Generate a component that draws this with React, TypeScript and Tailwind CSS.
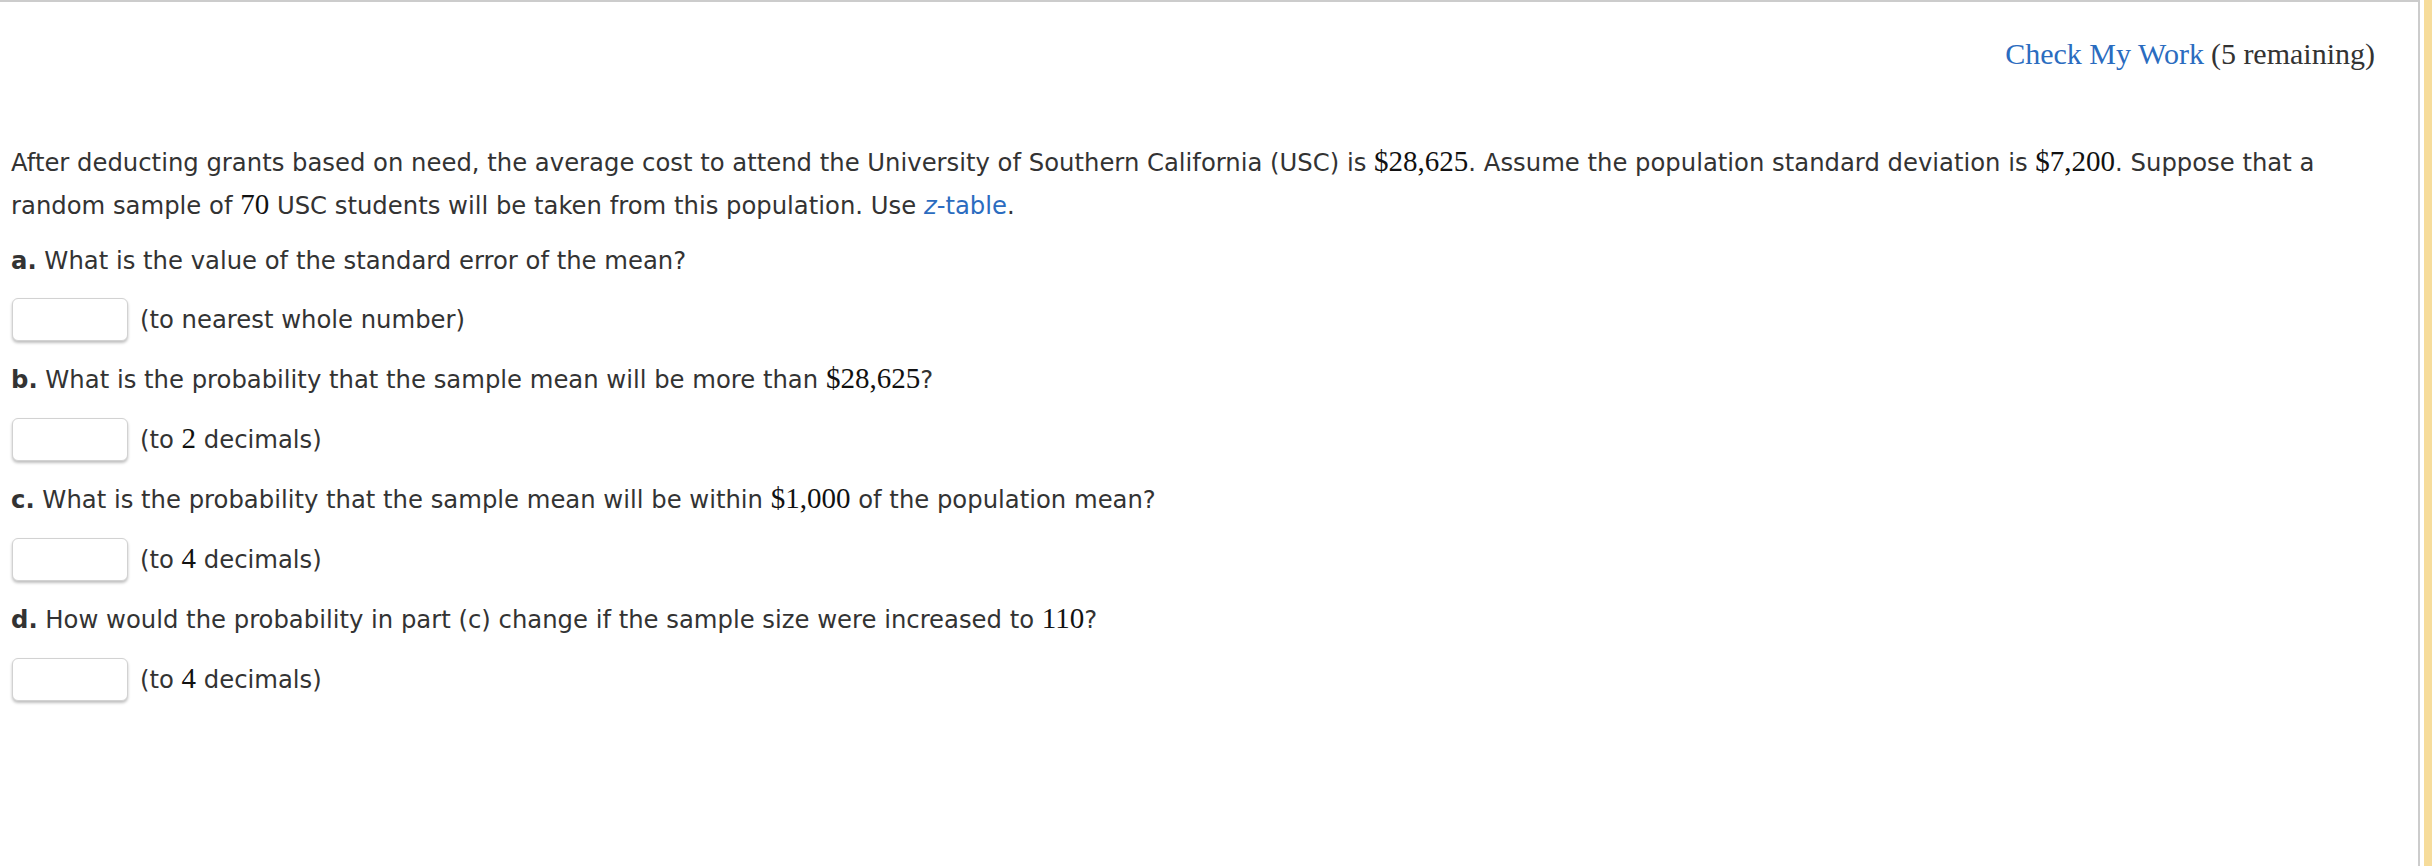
import React from "react";

const sans = "font-['DejaVu_Sans',Verdana,sans-serif]";
const math = "font-['Liberation_Serif','Times_New_Roman',serif] text-[29px] leading-none text-[#111]";

function Num({ children }: { children: React.ReactNode }) {
  return <span className={math}>{children}</span>;
}

function AnswerRow({ children, first }: { children: React.ReactNode; first?: boolean }) {
  return (
    <div className={`flex items-center gap-[12px] ${first ? "mt-[16px]" : "mt-[17px]"}`}>
      <input
        type="text"
        className="ml-[1px] w-[116px] h-[43px] rounded-[6px] border border-[#d2d2d2] bg-white shadow-[0_2px_3px_rgba(0,0,0,0.25)] outline-none"
      />
      <span className="leading-[43px]">{children}</span>
    </div>
  );
}

export default function App() {
  return (
    <div className="flex w-[2434px] h-[866px] bg-white">
      <div className="w-[2420px] h-full border-t-2 border-r-2 border-[#cccccc]">
        <div className="flex justify-end pr-[43px] pt-[34px] leading-[36px] font-['Liberation_Serif','Times_New_Roman',serif] text-[30px] text-[#333]">
          <a className="text-[#2b6cbf] cursor-pointer">Check My Work</a>
          <span className="ml-[7px]">(5 remaining)</span>
        </div>

        <div className={`${sans} text-[24.3px] text-[#333] pl-[11px] pr-[40px] mt-[69px]`}>
          <p className="leading-[43px]">
            After deducting grants based on need, the average cost to attend the University of Southern California (USC) is <Num>$28,625</Num>. Assume the population standard deviation is <Num>$7,200</Num>. Suppose that a random sample of <Num>70</Num> USC students will be taken from this population. Use{" "}
            <a className="text-[#2b6cbf] cursor-pointer">
              <i>z</i>-table
            </a>
            .
          </p>

          <p className="mt-[12px] leading-[43px]">
            <b>a.</b> What is the value of the standard error of the mean?
          </p>
          <AnswerRow first>(to nearest whole number)</AnswerRow>

          <p className="mt-[17px] leading-[43px]">
            <b>b.</b> What is the probability that the sample mean will be more than <Num>$28,625</Num>?
          </p>
          <AnswerRow>
            (to <Num>2</Num> decimals)
          </AnswerRow>

          <p className="mt-[17px] leading-[43px]">
            <b>c.</b> What is the probability that the sample mean will be within <Num>$1,000</Num> of the population mean?
          </p>
          <AnswerRow>
            (to <Num>4</Num> decimals)
          </AnswerRow>

          <p className="mt-[17px] leading-[43px]">
            <b>d.</b> How would the probability in part (c) change if the sample size were increased to <Num>110</Num>?
          </p>
          <AnswerRow>
            (to <Num>4</Num> decimals)
          </AnswerRow>
        </div>
      </div>
      <div className="w-[4px]" />
      <div className="w-[8px] h-full bg-[#f6dc9b]" />
    </div>
  );
}
